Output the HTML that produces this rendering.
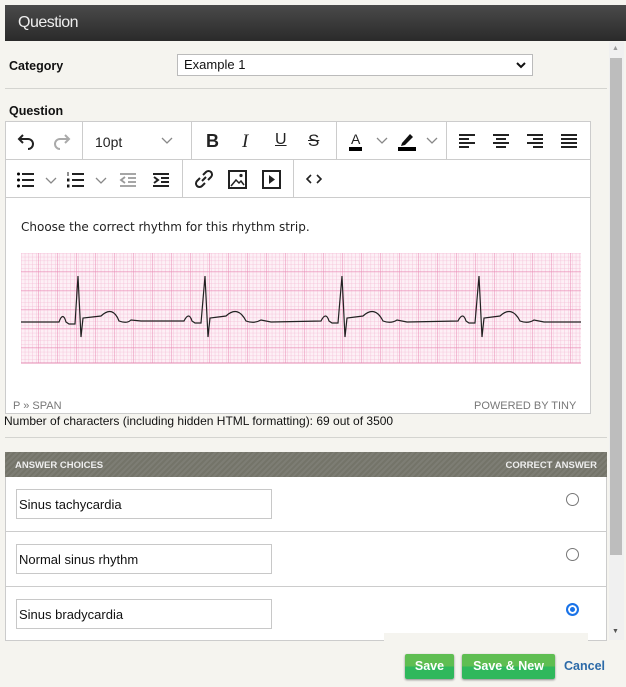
<!DOCTYPE html>
<html><head><meta charset="utf-8"><style>
*{box-sizing:border-box;margin:0;padding:0}
body{width:626px;height:687px;background:#f5f4ef;font-family:"Liberation Sans",sans-serif;position:relative;overflow:hidden;font-size:12px;color:#111}
.abs{position:absolute}
.hdr{left:5px;top:5px;width:621px;height:36px;background:linear-gradient(#4a4a4a,#2a2a2a);color:#eee;font-size:16px;padding:9px 0 0 13px;letter-spacing:-0.5px}
.b{font-weight:bold;font-size:12.5px}
.hr{height:1px;background:#d4d4d0;left:5px;width:602px}
.sel{left:177px;top:54px;width:356px;height:22px;border:1px solid #bbb;background:#fff;font-size:13px;padding:2px 6px}
.ed{left:5px;top:121px;width:586px;height:293px;border:1px solid #ccc;background:#fff}
.tb{position:absolute;left:0;width:584px;height:38px;border-bottom:1px solid #ccc}
.sep{position:absolute;top:0;width:1px;height:38px;background:#ccc}
.ic{position:absolute;font-size:16px;color:#222}
svg.i{position:absolute}
.ans{left:5px;top:452px;width:602px;height:25px;background:repeating-linear-gradient(135deg,#7d7d74 0 2px,#747469 2px 4px);color:#eee;font-weight:bold;font-size:9.5px;padding-top:8px}
.row{left:5px;width:602px;height:55px;background:#fff;border:1px solid #ccc;border-top:none}
.inp{position:absolute;left:10px;top:12px;width:256px;height:30px;border:1px solid #c8c8c8;font-size:13px;padding:7px 2px}
.rad{position:absolute;left:560px;top:16px;width:13px;height:13px;border:1px solid #777;border-radius:50%;background:#fff}
.btn{top:654px;height:25px;background:linear-gradient(#5fbe52 50%,#2fb85c 50%);color:#fff;font-weight:bold;font-size:12.5px;text-align:center;padding-top:5px;border-radius:2px;box-shadow:0 1px 2px #888}
</style></head><body>
<div class="abs hdr">Question</div>
<div class="abs" style="left:609px;top:42px;width:15px;height:598px;background:#f0f0f0"></div>
<div class="abs" style="left:610px;top:58px;width:12px;height:497px;background:#bdbdbd"></div>
<div class="abs" style="left:612px;top:45px;font-size:7px;color:#999">▲</div>
<div class="abs" style="left:612px;top:628px;font-size:7px;color:#555">▼</div>
<div class="abs b" style="left:9px;top:59px">Category</div>
<div class="abs sel">Example 1<svg style="position:absolute;right:6px;top:7px" width="10" height="7"><path d="M1 1L5 5L9 1" fill="none" stroke="#111" stroke-width="2"/></svg></div>
<div class="abs hr" style="top:88px"></div>
<div class="abs b" style="left:9px;top:104px">Question</div>
<div class="abs ed">
 <div class="tb" style="top:0">
  <svg class="i" style="left:10px;top:9px" width="20" height="20"><path d="M7 4L3 8L7 12M3 8H12A5 5 0 0 1 12 18" fill="none" stroke="#222" stroke-width="2"/></svg>
  <svg class="i" style="left:46px;top:9px" width="20" height="20"><path d="M13 4L17 8L13 12M17 8H8A5 5 0 0 0 8 18" fill="none" stroke="#aaa" stroke-width="2"/></svg>
  <div class="sep" style="left:76px"></div>
  <div class="ic" style="left:89px;top:12px;font-size:14px">10pt</div>
  <svg class="i" style="left:155px;top:15px" width="12" height="8"><path d="M1 1L6 6L11 1" fill="none" stroke="#888" stroke-width="1.3"/></svg>
  <div class="sep" style="left:185px"></div>
  <div class="ic" style="left:200px;top:9px;font-weight:bold;font-size:18px">B</div>
  <div class="ic" style="left:236px;top:9px;font-style:italic;font-size:19px;font-family:'Liberation Serif'">I</div>
  <div class="ic" style="left:269px;top:9px;text-decoration:underline;font-size:16px">U</div>
  <div class="ic" style="left:302px;top:9px;text-decoration:line-through;font-size:17px">S</div>
  <div class="sep" style="left:330px"></div>
  <div class="ic" style="left:343px;top:9px;font-size:14px;border-bottom:4px solid #000;padding:0 2px;line-height:16px">A</div>
  <svg class="i" style="left:370px;top:15px" width="12" height="8"><path d="M1 1L6 6L11 1" fill="none" stroke="#888" stroke-width="1.3"/></svg>
  <svg class="i" style="left:392px;top:9px" width="20" height="20"><path d="M4 12L12 3L15 6L7 14L3 15Z" fill="#111"/><rect x="0" y="16" width="18" height="4" fill="#000"/></svg>
  <svg class="i" style="left:420px;top:15px" width="12" height="8"><path d="M1 1L6 6L11 1" fill="none" stroke="#888" stroke-width="1.3"/></svg>
  <div class="sep" style="left:440px"></div>
  <svg class="i" style="left:452px;top:11px" width="18" height="16"><path d="M1 2H17M1 6H11M1 10H17M1 14H11" stroke="#222" stroke-width="2"/></svg>
  <svg class="i" style="left:486px;top:11px" width="18" height="16"><path d="M1 2H17M4 6H14M1 10H17M4 14H14" stroke="#222" stroke-width="2"/></svg>
  <svg class="i" style="left:520px;top:11px" width="18" height="16"><path d="M1 2H17M7 6H17M1 10H17M7 14H17" stroke="#222" stroke-width="2"/></svg>
  <svg class="i" style="left:554px;top:11px" width="18" height="16"><path d="M1 2H17M1 6H17M1 10H17M1 14H17" stroke="#222" stroke-width="2"/></svg>
 </div>
 <div class="tb" style="top:38px">
  <svg class="i" style="left:11px;top:12px" width="18" height="16"><path d="M5 2H17M5 8H17M5 14H17" stroke="#222" stroke-width="2"/><circle cx="1.5" cy="2" r="1.5"/><circle cx="1.5" cy="8" r="1.5"/><circle cx="1.5" cy="14" r="1.5"/></svg>
  <svg class="i" style="left:39px;top:17px" width="12" height="8"><path d="M1 1L6 6L11 1" fill="none" stroke="#888" stroke-width="1.3"/></svg>
  <svg class="i" style="left:61px;top:12px" width="18" height="16"><path d="M5 2H17M5 8H17M5 14H17" stroke="#222" stroke-width="2"/><path d="M1 0V4M0 7H2V9H0M0 13H2V15H0" stroke="#222" stroke-width="1"/></svg>
  <svg class="i" style="left:89px;top:17px" width="12" height="8"><path d="M1 1L6 6L11 1" fill="none" stroke="#888" stroke-width="1.3"/></svg>
  <svg class="i" style="left:113px;top:12px" width="18" height="16"><path d="M1 2H17M9 6H17M9 10H17M1 14H17M6 5L2 8L6 11" fill="none" stroke="#999" stroke-width="1.8"/></svg>
  <svg class="i" style="left:146px;top:12px" width="18" height="16"><path d="M1 2H17M9 6H17M9 10H17M1 14H17M2 5L6 8L2 11" fill="none" stroke="#222" stroke-width="2"/></svg>
  <div class="sep" style="left:176px"></div>
  <svg class="i" style="left:188px;top:9px" width="20" height="20"><path d="M8 12L12 8M9 6L12 3A3 3 0 0 1 17 8L14 11M11 14L8 17A3 3 0 0 1 3 12L6 9" fill="none" stroke="#222" stroke-width="2"/></svg>
  <svg class="i" style="left:222px;top:10px" width="19" height="19"><rect x="1" y="1" width="17" height="17" fill="none" stroke="#222" stroke-width="2"/><path d="M3 16L8 10L11 13L13 11L16 15" fill="none" stroke="#222" stroke-width="1.5"/><circle cx="13" cy="5.5" r="1.6" fill="#222"/></svg>
  <svg class="i" style="left:256px;top:10px" width="19" height="19"><rect x="1" y="1" width="17" height="17" fill="none" stroke="#222" stroke-width="2"/><path d="M7 5L13 9.5L7 14Z" fill="#222"/></svg>
  <div class="sep" style="left:287px"></div>
  <svg class="i" style="left:300px;top:14px" width="16" height="10"><path d="M5 1L1 5L5 9M11 1L15 5L11 9" fill="none" stroke="#222" stroke-width="1.6"/></svg>
 </div>
 <div class="abs" style="left:15px;top:98px;font-family:'DejaVu Sans';font-size:12px;color:#222">Choose the correct rhythm for this rhythm strip.</div>
 <svg class="abs" style="left:15px;top:131px" width="560" height="112">
  <defs>
   <pattern id="s" width="3.8" height="3.8" patternUnits="userSpaceOnUse"><path d="M0 0V3.8M0 0H3.8" stroke="#f4bcd5" stroke-width="0.8"/></pattern>
   <pattern id="l" x="-2" y="-1" width="19" height="19" patternUnits="userSpaceOnUse"><path d="M0 0V19M0 0H19" stroke="#e98ab4" stroke-width="1"/></pattern>
  </defs>
  <rect width="560" height="110" fill="#fdf0f6"/>
  <rect width="560" height="110" fill="url(#s)"/>
  <rect width="560" height="110" fill="url(#l)"/>
  <line x1="0" y1="110" x2="560" y2="110" stroke="#e48ab2"/>
  <g fill="none" stroke="#222" stroke-width="1.2">
  <path d="M0 69 L38 69 Q42 58 45 69 L48 71 L54 71 L57 23 L60 84 L62 65 L80 63 Q92 52 98 68 Q106 71 110 67 L120 68 L163 68 Q168 58 171 68 L174 70 L180 70 L184 23 L187 84 L189 65 L205 63 Q217 52 225 68 Q233 71 240 67 L250 69 L300 68 Q305 58 308 68 L311 70 L317 70 L321 23 L324 84 L326 65 L342 63 Q354 52 362 68 Q370 71 376 67 L386 69 L437 68 Q442 58 445 68 L448 70 L454 70 L458 23 L461 84 L463 65 L479 63 Q491 52 499 68 Q507 71 513 67 L523 69 L560 69"/>
  </g>
 </svg>
 <div class="abs" style="left:7px;top:278px;font-size:11px;color:#777">P » SPAN</div>
 <div class="abs" style="left:468px;top:278px;font-size:11px;color:#777">POWERED BY TINY</div>
</div>
<div class="abs" style="left:4px;top:414px;font-size:12px">Number of characters (including hidden HTML formatting): 69 out of 3500</div>
<div class="abs hr" style="top:437px"></div>
<div class="abs ans"><span style="margin-left:10px">ANSWER CHOICES</span><span style="position:absolute;right:10px">CORRECT ANSWER</span></div>
<div class="abs row" style="top:477px"><div class="inp">Sinus tachycardia</div><div class="rad"></div></div>
<div class="abs row" style="top:532px"><div class="inp">Normal sinus rhythm</div><div class="rad"></div></div>
<div class="abs row" style="top:587px;height:54px"><div class="inp">Sinus bradycardia</div><div class="rad" style="border:2px solid #1a73e8;box-shadow:inset 0 0 0 2px #fff;background:#1a73e8"></div></div>
<div class="abs" style="left:384px;top:633px;width:204px;height:8px;background:#f5f4ef"></div>
<div class="abs btn" style="left:405px;width:49px">Save</div>
<div class="abs btn" style="left:462px;width:93px">Save &amp; New</div>
<div class="abs" style="left:564px;top:659px;color:#2c6aa8;font-weight:bold;font-size:12.5px">Cancel</div>
</body></html>
